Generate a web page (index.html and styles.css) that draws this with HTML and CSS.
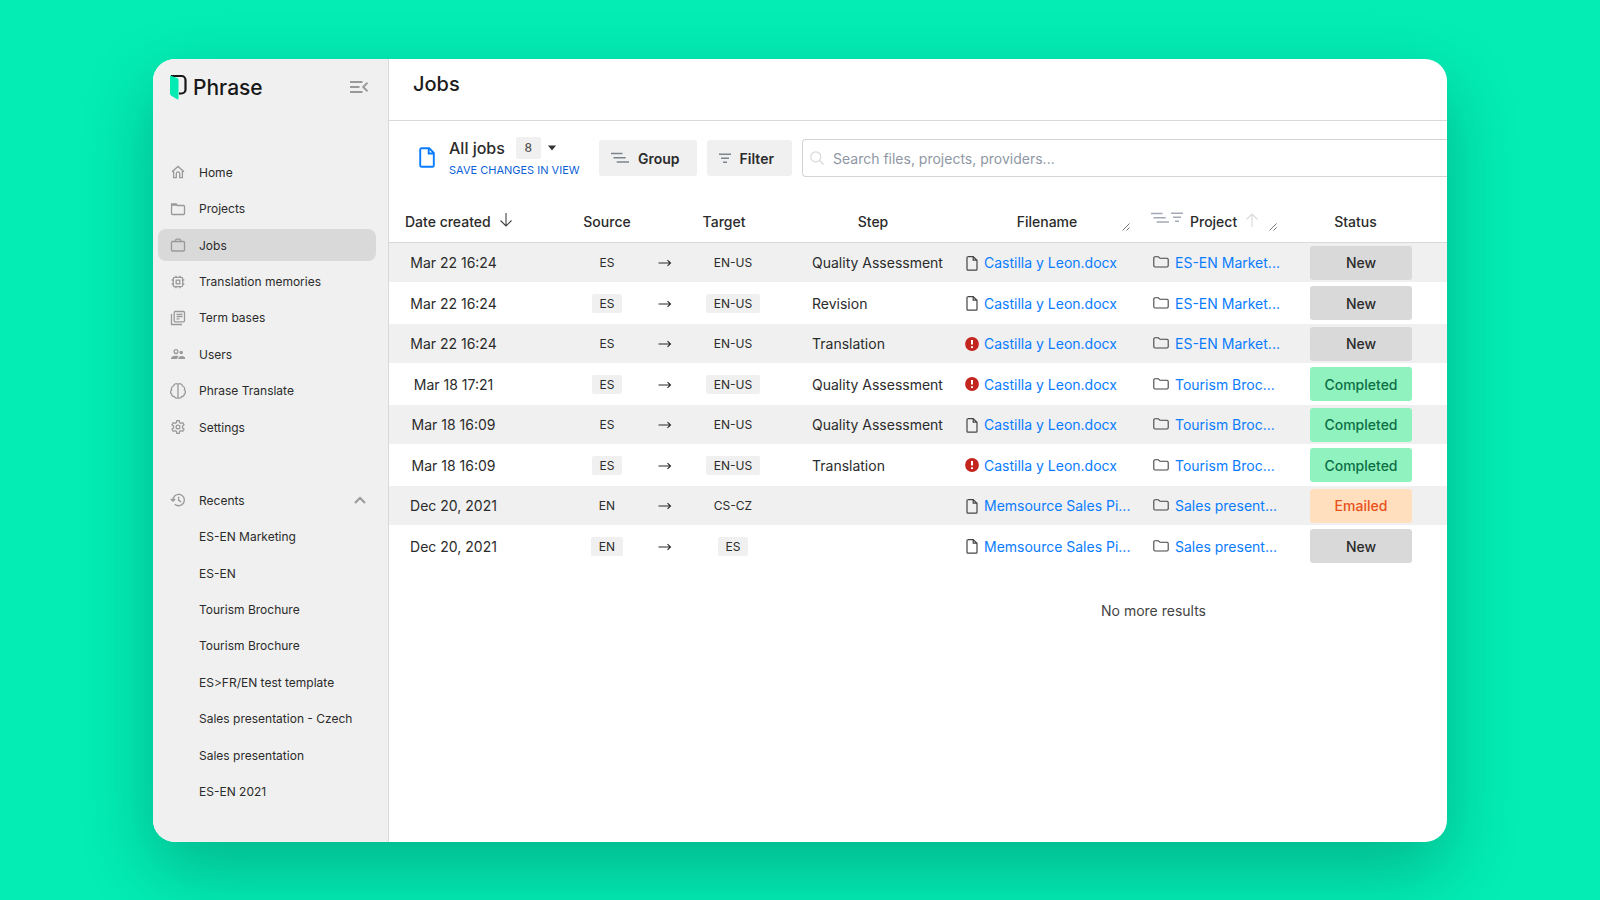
FILE: index.html
```html
<!DOCTYPE html>
<html lang="en">
<head>
  <meta charset="UTF-8">
  <meta name="viewport" content="width=device-width, initial-scale=1.0">
  <title>Phrase - Jobs</title>
  <link rel="stylesheet" href="styles.css">
</head>
<body>

<!-- Shared icons -->
<svg class="sprite" aria-hidden="true">
  <symbol id="doc" viewBox="0 0 12 16"><path d="M1.800 1.600h5.400L11 5.200V14.200a.9.9 0 0 1-.9.9H1.900a.9.9 0 0 1-.9-.9V2.500a.9.9 0 0 1 .9-.9zM7.200 1.600v3.600H11" fill="none" stroke="currentColor" stroke-width="1.200"/></symbol>
  <symbol id="folder" viewBox="0 0 16 13"><path d="M.8 9.800V2a1.200 1.200 0 0 1 1.200-1.200h3.300L7 2.300h7a1.200 1.200 0 0 1 1.200 1.200v6.300a1.200 1.200 0 0 1-1.200 1.200H2a1.200 1.200 0 0 1-1.200-1.200z" fill="none" stroke="currentColor" stroke-width="1.100"/></symbol>
  <symbol id="alert" viewBox="0 0 14 14"><circle cx="7" cy="7" r="6.900" fill="#c3261f"/><path d="M7 3v4.600M7 9.200v1.900" stroke="#fff" stroke-width="2"/></symbol>
  <symbol id="arrow" viewBox="0 0 14 10"><path d="M.5 4h12M9.500 1.200l3 2.800-3 2.800" fill="none" stroke="currentColor" stroke-width="1.100"/></symbol>
  <symbol id="group" viewBox="0 0 18 12"><path d="M0 1.500h11.500M2.500 5.700h12.200M5.700 10H18" fill="none" stroke="currentColor" stroke-width="1.600"/></symbol>
  <symbol id="filter" viewBox="0 0 12 11"><path d="M0 1.200h12M2 5.200h8M4 9.200h4" fill="none" stroke="currentColor" stroke-width="1.600"/></symbol>
  <symbol id="grip" viewBox="0 0 8 8"><path d="M.5 7.500l7-7M4.500 7.500l3-3" stroke="currentColor" stroke-width="1"/></symbol>
</svg>

<div class="app">
  <aside class="sidebar">
    <div class="brand">
      <a class="logo" href="#">
        <svg width="17" height="26" viewBox="0 0 17 26" aria-hidden="true"><path d="M1 2h10.500a4 4 0 0 1 4 4v9.500a4 4 0 0 1-4 4H9" fill="none" stroke="#181818" stroke-width="2.200"/><path d="M0 1.500l7.200 2.400q1.300.5 1.300 1.800V24.500q0 1.300-1.300.7L1.300 21.800Q0 21 0 19.800z" fill="#03eab3"/></svg>
        <span>Phrase</span>
      </a>
      <button class="collapse" type="button" aria-label="Collapse menu">
        <svg width="18" height="14" viewBox="0 0 18 14"><path d="M0 2h12.500M0 7h9.500M0 12h12.500M17.500 2.700L13.200 7l4.300 4.300" fill="none" stroke="currentColor" stroke-width="1.900"/></svg>
      </button>
    </div>

    <nav class="menu">
      <ul class="main-links">
        <li><a href="#"><svg width="16" height="16" viewBox="0 0 16 16"><path d="M2 7.800L8 2.400l6 5.400M3.600 7v6.700h2.700V9.500a1.700 1.700 0 0 1 3.400 0v4.200h2.700V7"/></svg>Home</a></li>
        <li><a href="#"><svg width="16" height="16" viewBox="0 0 16 16"><path d="M1.600 3h4.600l1.300 1.500h6a1 1 0 0 1 1 1V12.500a1 1 0 0 1-1 1h-11a1 1 0 0 1-1-1zM2 4h5"/></svg>Projects</a></li>
        <li><a class="active" href="#"><svg width="16" height="16" viewBox="0 0 16 16"><path d="M2.500 4.500h11a1 1 0 0 1 1 1V13a1 1 0 0 1-1 1h-11a1 1 0 0 1-1-1V5.500a1 1 0 0 1 1-1zM5.500 4.500V3.500a1.400 1.400 0 0 1 1.400-1.400h2.200a1.400 1.400 0 0 1 1.400 1.400v1"/></svg>Jobs</a></li>
        <li><a href="#"><svg width="16" height="16" viewBox="0 0 16 16"><rect x="3.300" y="3.300" width="9.400" height="9.400" rx="1.500"/><rect x="6.200" y="6.200" width="3.600" height="3.600"/><path d="M6 3V1.700M10 3V1.700M6 14.300V13M10 14.300V13M3 6H1.700M3 10H1.700M14.300 6H13M14.300 10H13"/></svg>Translation memories</a></li>
        <li><a href="#"><svg width="16" height="16" viewBox="0 0 16 16"><rect x="4.200" y="1.500" width="10.300" height="10.300" rx="1"/><path d="M1.500 4v10.500H12M6.500 4.500h6M6.500 6.700h6M6.500 8.900h3"/></svg>Term bases</a></li>
        <li><a href="#"><svg width="16" height="16" viewBox="0 0 16 16"><circle cx="6" cy="5.600" r="1.900"/><circle class="solid" cx="11.200" cy="6.500" r="1.100"/><path class="solid" d="M1.700 12.400q.3-2 4.300-2.100l1.500.2-1 1.900zM9 12.400h5.500q-.2-1.800-3.200-1.800-2 .1-2.300 1.800z"/></svg>Users</a></li>
        <li><a href="#"><svg width="16" height="16" viewBox="0 0 16 16"><path d="M8 1v14M8 1.200C5.800-.1 3.700 1.300 3.500 3 1.400 3.800 1 5.800 1.700 7 0 8 .3 10.300 1.700 11c-.1 1.700 1.200 2.600 2.500 2.500C5 15.300 7 15.500 8 14.800c1 .7 3 .5 3.800-1.300 1.300.1 2.600-.8 2.500-2.500 1.400-.7 1.700-3 0-4 .7-1.200.3-3.200-1.800-4-.2-1.700-2.300-3.100-4.500-1.800z"/></svg>Phrase Translate</a></li>
        <li><a href="#"><svg width="16" height="16" viewBox="0 0 16 16"><path d="M6.800 1.600h2.400l.4 1.900 1.300.8 1.900-.6L14 5.800l-1.500 1.300v1.800L14 10.200l-1.200 2.100-1.900-.6-1.300.8-.4 1.900H6.800l-.4-1.900-1.300-.8-1.900.6L2 10.200l1.500-1.300V7.100L2 5.800l1.200-2.100 1.900.6 1.300-.8z"/><circle cx="8" cy="8" r="1.900"/></svg>Settings</a></li>
      </ul>
      <ul class="recent-links">
        <li>
          <button type="button" aria-expanded="true">
            <svg width="16" height="16" viewBox="0 0 16 16"><path d="M3 8.500a5.700 5.700 0 1 1 1.800 3.700M.8 7l2.200 2 2.200-2M8.600 4.800V8.300l2.600 1.600"/></svg>
            Recents
            <svg class="chevron" width="12" height="8" viewBox="0 0 12 8"><path d="M1 7l5-5 5 5"/></svg>
          </button>
        </li>
        <li><a href="#">ES-EN Marketing</a></li>
        <li><a href="#">ES-EN</a></li>
        <li><a href="#">Tourism Brochure</a></li>
        <li><a href="#">Tourism Brochure</a></li>
        <li><a href="#">ES&gt;FR/EN test template</a></li>
        <li><a href="#">Sales presentation - Czech</a></li>
        <li><a href="#">Sales presentation</a></li>
        <li><a href="#">ES-EN 2021</a></li>
      </ul>
    </nav>
  </aside>

  <main class="content">
    <header class="page-header">
      <h1>Jobs</h1>
    </header>

    <div class="toolbar">
      <svg class="view-icon" width="16" height="21" viewBox="0 0 16 21" aria-hidden="true"><path d="M2.500 1.200h7.700L14.800 6v12.500a1.300 1.300 0 0 1-1.300 1.300h-11a1.300 1.300 0 0 1-1.300-1.300v-16a1.300 1.300 0 0 1 1.300-1.300zM9.700 1.500v5h5" fill="none" stroke="#0a7cff" stroke-width="1.900"/></svg>
      <div class="view">
        <button class="view-name" type="button">All jobs <span class="count">8</span><svg width="8" height="6" viewBox="0 0 8 6"><path d="M0 .5h8L4 5.500z" fill="#333"/></svg></button>
        <a class="save" href="#">SAVE CHANGES IN VIEW</a>
      </div>
      <button class="tool" type="button"><svg width="18" height="12"><use href="#group"/></svg>Group</button>
      <button class="tool" type="button"><svg width="12" height="11"><use href="#filter"/></svg>Filter</button>
      <label class="search">
        <svg width="14" height="14" viewBox="0 0 14 14" aria-hidden="true"><circle cx="5.800" cy="5.800" r="5" fill="none" stroke="currentColor" stroke-width="1.200"/><path d="M9.500 9.500l4 4" stroke="currentColor" stroke-width="1.200"/></svg>
        <input type="text" placeholder="Search files, projects, providers..." aria-label="Search">
      </label>
    </div>

    <table class="jobs">
      <colgroup>
        <col class="col-date"><col class="col-source"><col class="col-arrow"><col class="col-target"><col class="col-step"><col class="col-file"><col class="col-project"><col>
      </colgroup>
      <thead>
        <tr>
          <th class="date">Date created<svg class="sort" width="14" height="14" viewBox="0 0 14 14"><path d="M7 0v13M1.500 7.500L7 13l5.500-5.500"/></svg></th>
          <th class="source">Source</th>
          <th class="target" colspan="2">Target</th>
          <th class="step">Step</th>
          <th class="file">Filename<svg class="grip" width="8" height="8"><use href="#grip"/></svg></th>
          <th class="project">
            <div class="project-head">
              <svg class="mini" width="18" height="12"><use href="#group"/></svg><svg class="mini" width="12" height="11"><use href="#filter"/></svg><span>Project</span><svg class="sort faint" width="14" height="14" viewBox="0 0 14 14"><path d="M7 14V1M1.500 6.500L7 1l5.500 5.500"/></svg>
            </div>
            <svg class="grip" width="8" height="8"><use href="#grip"/></svg>
          </th>
          <th class="status">Status</th>
        </tr>
      </thead>
      <tbody>
        <tr>
          <td class="date">Mar 22 16:24</td><td><span class="lang">ES</span></td><td><svg width="14" height="10"><use href="#arrow"/></svg></td><td><span class="lang">EN-US</span></td>
          <td class="step">Quality Assessment</td>
          <td class="file"><a href="#"><svg width="14" height="16"><use href="#doc"/></svg>Castilla y Leon.docx</a></td>
          <td class="project"><a href="#"><svg width="16" height="13"><use href="#folder"/></svg>ES-EN Market...</a></td>
          <td class="status"><button class="state" type="button">New</button></td>
        </tr>
        <tr>
          <td class="date">Mar 22 16:24</td><td><span class="lang">ES</span></td><td><svg width="14" height="10"><use href="#arrow"/></svg></td><td><span class="lang">EN-US</span></td>
          <td class="step">Revision</td>
          <td class="file"><a href="#"><svg width="14" height="16"><use href="#doc"/></svg>Castilla y Leon.docx</a></td>
          <td class="project"><a href="#"><svg width="16" height="13"><use href="#folder"/></svg>ES-EN Market...</a></td>
          <td class="status"><button class="state" type="button">New</button></td>
        </tr>
        <tr>
          <td class="date">Mar 22 16:24</td><td><span class="lang">ES</span></td><td><svg width="14" height="10"><use href="#arrow"/></svg></td><td><span class="lang">EN-US</span></td>
          <td class="step">Translation</td>
          <td class="file"><a href="#"><svg width="14" height="14"><use href="#alert"/></svg>Castilla y Leon.docx</a></td>
          <td class="project"><a href="#"><svg width="16" height="13"><use href="#folder"/></svg>ES-EN Market...</a></td>
          <td class="status"><button class="state" type="button">New</button></td>
        </tr>
        <tr>
          <td class="date">Mar 18 17:21</td><td><span class="lang">ES</span></td><td><svg width="14" height="10"><use href="#arrow"/></svg></td><td><span class="lang">EN-US</span></td>
          <td class="step">Quality Assessment</td>
          <td class="file"><a href="#"><svg width="14" height="14"><use href="#alert"/></svg>Castilla y Leon.docx</a></td>
          <td class="project"><a href="#"><svg width="16" height="13"><use href="#folder"/></svg>Tourism Broc...</a></td>
          <td class="status"><button class="state completed" type="button">Completed</button></td>
        </tr>
        <tr>
          <td class="date">Mar 18 16:09</td><td><span class="lang">ES</span></td><td><svg width="14" height="10"><use href="#arrow"/></svg></td><td><span class="lang">EN-US</span></td>
          <td class="step">Quality Assessment</td>
          <td class="file"><a href="#"><svg width="14" height="16"><use href="#doc"/></svg>Castilla y Leon.docx</a></td>
          <td class="project"><a href="#"><svg width="16" height="13"><use href="#folder"/></svg>Tourism Broc...</a></td>
          <td class="status"><button class="state completed" type="button">Completed</button></td>
        </tr>
        <tr>
          <td class="date">Mar 18 16:09</td><td><span class="lang">ES</span></td><td><svg width="14" height="10"><use href="#arrow"/></svg></td><td><span class="lang">EN-US</span></td>
          <td class="step">Translation</td>
          <td class="file"><a href="#"><svg width="14" height="14"><use href="#alert"/></svg>Castilla y Leon.docx</a></td>
          <td class="project"><a href="#"><svg width="16" height="13"><use href="#folder"/></svg>Tourism Broc...</a></td>
          <td class="status"><button class="state completed" type="button">Completed</button></td>
        </tr>
        <tr>
          <td class="date">Dec 20, 2021</td><td><span class="lang">EN</span></td><td><svg width="14" height="10"><use href="#arrow"/></svg></td><td><span class="lang">CS-CZ</span></td>
          <td class="step"></td>
          <td class="file"><a href="#"><svg width="14" height="16"><use href="#doc"/></svg>Memsource Sales Pi...</a></td>
          <td class="project"><a href="#"><svg width="16" height="13"><use href="#folder"/></svg>Sales present...</a></td>
          <td class="status"><button class="state emailed" type="button">Emailed</button></td>
        </tr>
        <tr>
          <td class="date">Dec 20, 2021</td><td><span class="lang">EN</span></td><td><svg width="14" height="10"><use href="#arrow"/></svg></td><td><span class="lang">ES</span></td>
          <td class="step"></td>
          <td class="file"><a href="#"><svg width="14" height="16"><use href="#doc"/></svg>Memsource Sales Pi...</a></td>
          <td class="project"><a href="#"><svg width="16" height="13"><use href="#folder"/></svg>Sales present...</a></td>
          <td class="status"><button class="state" type="button">New</button></td>
        </tr>
      </tbody>
    </table>
    <p class="end">No more results</p>
  </main>
</div>

</body>
</html>
```
FILE: styles.css
```css
* {
  box-sizing: border-box;
}
body {
  margin: 0;
  min-height: 100vh;
  padding: 59px 153px 58px;
  display: flex;
  background: #03edb5;
  color: #2b2b2b;
  font-family: Inter, "Liberation Sans", sans-serif;
  font-size: 14px;
}
a {
  color: inherit;
  text-decoration: none;
}
button {
  font: inherit;
  color: inherit;
  border: none;
  background: none;
  padding: 0;
  cursor: pointer;
}
ul {
  list-style: none;
  margin: 0;
  padding: 0;
}
.sprite {
  display: none;
}
.app {
  flex: 1;
  display: flex;
  overflow: hidden;
  background: #fff;
  border-radius: 22px;
  box-shadow: 0 28px 72px rgba(0, 0, 0, 0.24);
}

/* Sidebar */
.sidebar {
  width: 236px;
  flex-shrink: 0;
  display: flex;
  flex-direction: column;
  background: #f0f0f0;
  border-right: 1px solid #d9d9d9;
  font-size: 12px;
  padding-bottom: 32px;
}
.brand {
  height: 56px;
  display: flex;
  align-items: center;
  justify-content: space-between;
  padding: 0 20px 0 17px;
  margin-bottom: 39px;
}
.logo {
  display: flex;
  align-items: center;
  gap: 6px;
  font-size: 21px;
  font-weight: 500;
  color: #181818;
}
.collapse {
  color: #999;
}
.collapse svg {
  display: block;
}
.menu {
  flex: 1;
  display: flex;
  flex-direction: column;
  padding: 0 12px 0 5px;
}
.menu ul {
  flex: 1;
  display: flex;
  flex-direction: column;
}
/* an empty slot between the two lists */
.main-links::after {
  content: "";
  flex: 1;
}
.menu li {
  flex: 1;
  display: flex;
  align-items: center;
}
.menu li a,
.menu li button {
  flex: 1;
  height: 32px;
  display: flex;
  align-items: center;
  gap: 13px;
  padding: 0 10px 0 12px;
  border-radius: 8px;
}
.menu .recent-links a {
  padding-left: 41px;
}
.menu svg {
  fill: none;
  stroke: #999;
  stroke-width: 1.3;
}
.menu .active {
  background: #d9d9d9;
}
.menu .solid {
  fill: #999;
}
.menu .chevron {
  margin-left: auto;
  stroke-width: 2;
}

/* Header and toolbar */
.content {
  flex: 1;
  min-width: 0;
}
.page-header {
  height: 62px;
  padding: 12px 24px;
  border-bottom: 1px solid #d9d9d9;
}
h1 {
  margin: 0;
  font-size: 20px;
  line-height: 26px;
  font-weight: 500;
  color: #1c1c1c;
}
.toolbar {
  height: 76px;
  display: flex;
  align-items: center;
  padding: 0 0 2px 30px;
}
.view-icon {
  margin-bottom: 2px;
}
.view {
  width: 136px;
  margin: 0 14px;
}
.view-name {
  display: flex;
  align-items: center;
  height: 24px;
  font-size: 16px;
  font-weight: 500;
}
.count {
  margin: 0 7px 0 11px;
  width: 25px;
  line-height: 22px;
  background: #f0f0f0;
  border-radius: 2px;
  font-size: 12px;
  color: #555;
}
.save {
  display: block;
  font-size: 11px;
  line-height: 20px;
  white-space: nowrap;
  color: #0b5fd6;
}
.tool {
  height: 36px;
  display: flex;
  align-items: center;
  gap: 9px;
  padding: 0 17px 0 12px;
  margin-right: 10px;
  background: #f0f0f0;
  border-radius: 3px;
  font-weight: 600;
}
.tool + .tool {
  padding-right: 18px;
}
.tool svg {
  color: #7c848e;
}
.search {
  flex: 1;
  height: 38px;
  display: flex;
  align-items: center;
  gap: 9px;
  padding-left: 7px;
  border: 1px solid #d4d4d4;
  border-right: none;
  border-radius: 4px 0 0 4px;
  color: #d9d9d9;
}
.search input {
  flex: 1;
  border: none;
  outline: none;
  padding: 0;
  font: inherit;
  color: #2b2b2b;
}
.search input::placeholder {
  color: #8f97a5;
}

/* Jobs table */
.jobs {
  width: 100%;
  table-layout: fixed;
  border-collapse: separate;
  border-spacing: 0;
}
.col-date { width: 175px; }
.col-source { width: 86px; }
.col-arrow { width: 30px; }
.col-target { width: 106px; }
.col-step { width: 174px; }
.col-file { width: 174px; }
.col-project { width: 156px; }
th,
td {
  padding: 0;
  text-align: center;
  white-space: nowrap;
}
th {
  position: relative;
  height: 46px;
  padding-top: 4px;
  font-weight: 500;
  border-bottom: 1px solid #d9d9d9;
}
th.date {
  text-align: left;
  padding-left: 16px;
}
th.target {
  padding-left: 12px;
}
th.status {
  padding-right: 26px;
}
.sort {
  margin-left: 8px;
  fill: none;
  stroke: #444;
  stroke-width: 1.1;
}
.faint {
  margin-bottom: 4px;
  stroke: #d9d9d9;
}
.project-head {
  display: flex;
  align-items: center;
  padding-left: 17px;
}
.project-head span {
  margin-left: 7px;
}
.mini {
  margin: 0 2px 8px 0;
  color: #a3a9b5;
}
.mini + .mini {
  margin-right: 0;
}
.grip {
  position: absolute;
  right: 4px;
  bottom: 11px;
  color: #777;
}
.project .grip {
  right: 13px;
}
tbody tr {
  height: 42px;
}
tbody tr:nth-child(odd) {
  height: 39px;
  background: #f0f0f0;
}
td.date {
  padding-right: 46px;
}
td svg {
  vertical-align: middle;
}
.lang {
  display: inline-block;
  padding: 0 8px;
  line-height: 19px;
  background: #f0f0f0;
  border-radius: 2px;
  font-size: 12px;
}
td.step {
  text-align: left;
  padding-left: 26px;
}
td a {
  display: flex;
  align-items: center;
  color: #0a7cff;
}
td a svg {
  color: #444;
}
td.file a {
  gap: 5px;
  padding-left: 5px;
}
td.project a {
  gap: 6px;
  padding-left: 19px;
}
td.status {
  text-align: left;
  padding-left: 20px;
}
.state {
  display: block;
  width: 102px;
  height: 34px;
  border-radius: 3px;
  background: #d9d9d9;
  font-weight: 500;
}
.completed {
  background: #90f2be;
  color: #0c6e45;
}
.emailed {
  background: #ffdfbd;
  color: #e8501c;
}
.end {
  margin: 35px 0 0;
  padding-left: 471px;
  text-align: center;
  color: #444;
}
```
